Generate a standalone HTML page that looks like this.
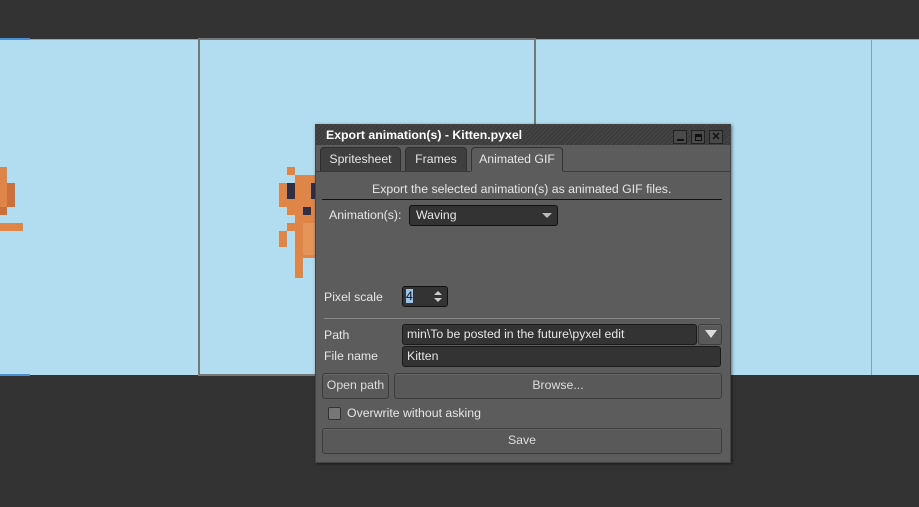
<!DOCTYPE html>
<html><head><style>
*{box-sizing:border-box;margin:0;padding:0}
body{width:919px;height:507px;background:#333;position:relative;overflow:hidden;font-family:"Liberation Sans",sans-serif;font-size:12.3px;color:#e0e0e0}
.a{position:absolute}
.p{position:absolute;background:#e08548}
.field{position:absolute;background:#333;border:1px solid #1a1a1a;border-radius:3px;color:#e6e6e6;padding-left:6px;line-height:17px}
.btn{position:absolute;background:#595959;border:1px solid #3c3c3c;border-radius:3px;text-align:center;color:#ddd;line-height:22px;box-shadow:inset 0 1px 0 #666}
.lbl{position:absolute;color:#e6e6e6}
.tab{position:absolute;top:147px;height:24px;border:1px solid #2e2e2e;border-bottom:none;border-radius:4px 4px 0 0;background:#3f3f3f;line-height:23px;text-align:center;color:#e6e6e6}
.wb{position:absolute;top:130px;width:14px;height:14px;border:1px solid #222;background:#4a4a4a}
</style></head><body>
<div class="a" style="left:0;top:39px;width:919px;height:336px;background:#b2dcef"></div>
<div class="a" style="left:0;top:38px;width:30px;height:2px;background:#4a8fd6"></div>
<div class="a" style="left:0;top:374px;width:30px;height:2px;background:#4a8fd6"></div>
<div class="a" style="left:30px;top:39px;width:889px;height:1px;background:#8fa8b4"></div>
<div class="a" style="left:198px;top:38px;width:338px;height:338px;border:2px solid #777"></div>
<div class="a" style="left:871px;top:39px;width:1px;height:336px;background:#8aa0aa"></div>
<div class="p" style="left:0;top:167px;width:7px;height:48px"></div>
<div class="p" style="left:7px;top:183px;width:8px;height:24px;background:#cc6f3a"></div>
<div class="p" style="left:0;top:207px;width:7px;height:8px;background:#cc6f3a"></div>
<div class="p" style="left:0;top:223px;width:23px;height:8px"></div>
<div class="p" style="left:287px;top:167px;width:8px;height:8px"></div>
<div class="p" style="left:295px;top:175px;width:25px;height:8px"></div>
<div class="p" style="left:279px;top:183px;width:41px;height:24px"></div>
<div class="p" style="left:287px;top:207px;width:33px;height:8px"></div>
<div class="a" style="left:287px;top:183px;width:8px;height:16px;background:#2f2e42"></div>
<div class="a" style="left:311px;top:183px;width:8px;height:16px;background:#2f2e42"></div>
<div class="a" style="left:303px;top:207px;width:8px;height:8px;background:#2f2e42"></div>
<div class="p" style="left:295px;top:215px;width:25px;height:43px"></div>
<div class="a" style="left:303px;top:223px;width:17px;height:32px;background:#e4955a"></div>
<div class="p" style="left:287px;top:223px;width:8px;height:8px"></div>
<div class="p" style="left:279px;top:231px;width:8px;height:16px"></div>
<div class="p" style="left:295px;top:258px;width:8px;height:20px"></div>
<div class="a" style="left:315px;top:124px;width:416px;height:339px;background:#5c5c5c;border:1px solid #444;box-shadow:1px 1px 3px rgba(0,0,0,.5)"></div>
<div class="a" style="left:316px;top:125px;width:414px;height:20px;background:repeating-linear-gradient(135deg,#474747 0 1px,#3c3c3c 1px 3px)"></div>
<div class="a" style="left:326px;top:128px;font-weight:bold;color:#fff;font-size:12.3px">Export animation(s) - Kitten.pyxel</div>
<div class="wb" style="left:673px"><div class="a" style="left:3px;top:8px;width:7px;height:2px;background:#111"></div></div>
<div class="wb" style="left:691px"><div class="a" style="left:3px;top:3px;width:7px;height:7px;border:1px solid #111;border-top-width:3px"></div></div>
<div class="wb" style="left:709px;font-size:11px;font-weight:bold;color:#111;line-height:12px;text-align:center">✕</div>
<div class="tab" style="left:320px;width:81px">Spritesheet</div>
<div class="tab" style="left:405px;width:62px">Frames</div>
<div class="tab" style="left:471px;width:92px;background:#5c5c5c;border-color:#333">Animated GIF</div>
<div class="a" style="left:316px;top:171px;width:155px;height:1px;background:#3a3a3a"></div>
<div class="a" style="left:563px;top:171px;width:167px;height:1px;background:#3a3a3a"></div>
<div class="lbl" style="left:372px;top:182px">Export the selected animation(s) as animated GIF files.</div>
<div class="a" style="left:322px;top:199px;width:400px;height:1px;background:#111"></div>
<div class="lbl" style="left:329px;top:208px">Animation(s):</div>
<div class="field" style="left:409px;top:205px;width:149px;height:21px;border-color:#111;line-height:19px">Waving<div class="a" style="right:5px;top:7px;border-left:5px solid transparent;border-right:5px solid transparent;border-top:5px solid #bbb"></div></div>
<div class="lbl" style="left:324px;top:290px">Pixel scale</div>
<div class="field" style="left:402px;top:286px;width:46px;height:21px;border-color:#111;padding-left:3px;line-height:19px"><span style="background:#9cc4ea;color:#111">4</span><div class="a" style="right:5px;top:4px;border-left:4px solid transparent;border-right:4px solid transparent;border-bottom:4px solid #ccc"></div><div class="a" style="right:5px;top:11px;border-left:4px solid transparent;border-right:4px solid transparent;border-top:4px solid #ccc"></div></div>
<div class="a" style="left:324px;top:318px;width:396px;height:1px;background:#888"></div>
<div class="lbl" style="left:324px;top:328px">Path</div>
<div class="field" style="left:402px;top:324px;width:295px;height:21px;line-height:19px;padding-left:4px">min\To be posted in the future\pyxel edit</div>
<div class="btn" style="left:698px;top:324px;width:24px;height:21px"><div class="a" style="left:6px;top:5px;border-left:6px solid transparent;border-right:6px solid transparent;border-top:8px solid #ddd"></div></div>
<div class="lbl" style="left:324px;top:349px">File name</div>
<div class="field" style="left:402px;top:346px;width:319px;height:21px;line-height:19px;padding-left:4px">Kitten</div>
<div class="btn" style="left:322px;top:373px;width:67px;height:26px;line-height:23px">Open path</div>
<div class="btn" style="left:394px;top:373px;width:328px;height:26px;line-height:23px">Browse...</div>
<div class="a" style="left:328px;top:407px;width:13px;height:13px;background:#777;border:1px solid #333;border-radius:2px"></div>
<div class="lbl" style="left:347px;top:406px">Overwrite without asking</div>
<div class="btn" style="left:322px;top:428px;width:400px;height:26px;line-height:23px">Save</div>
</body></html>
